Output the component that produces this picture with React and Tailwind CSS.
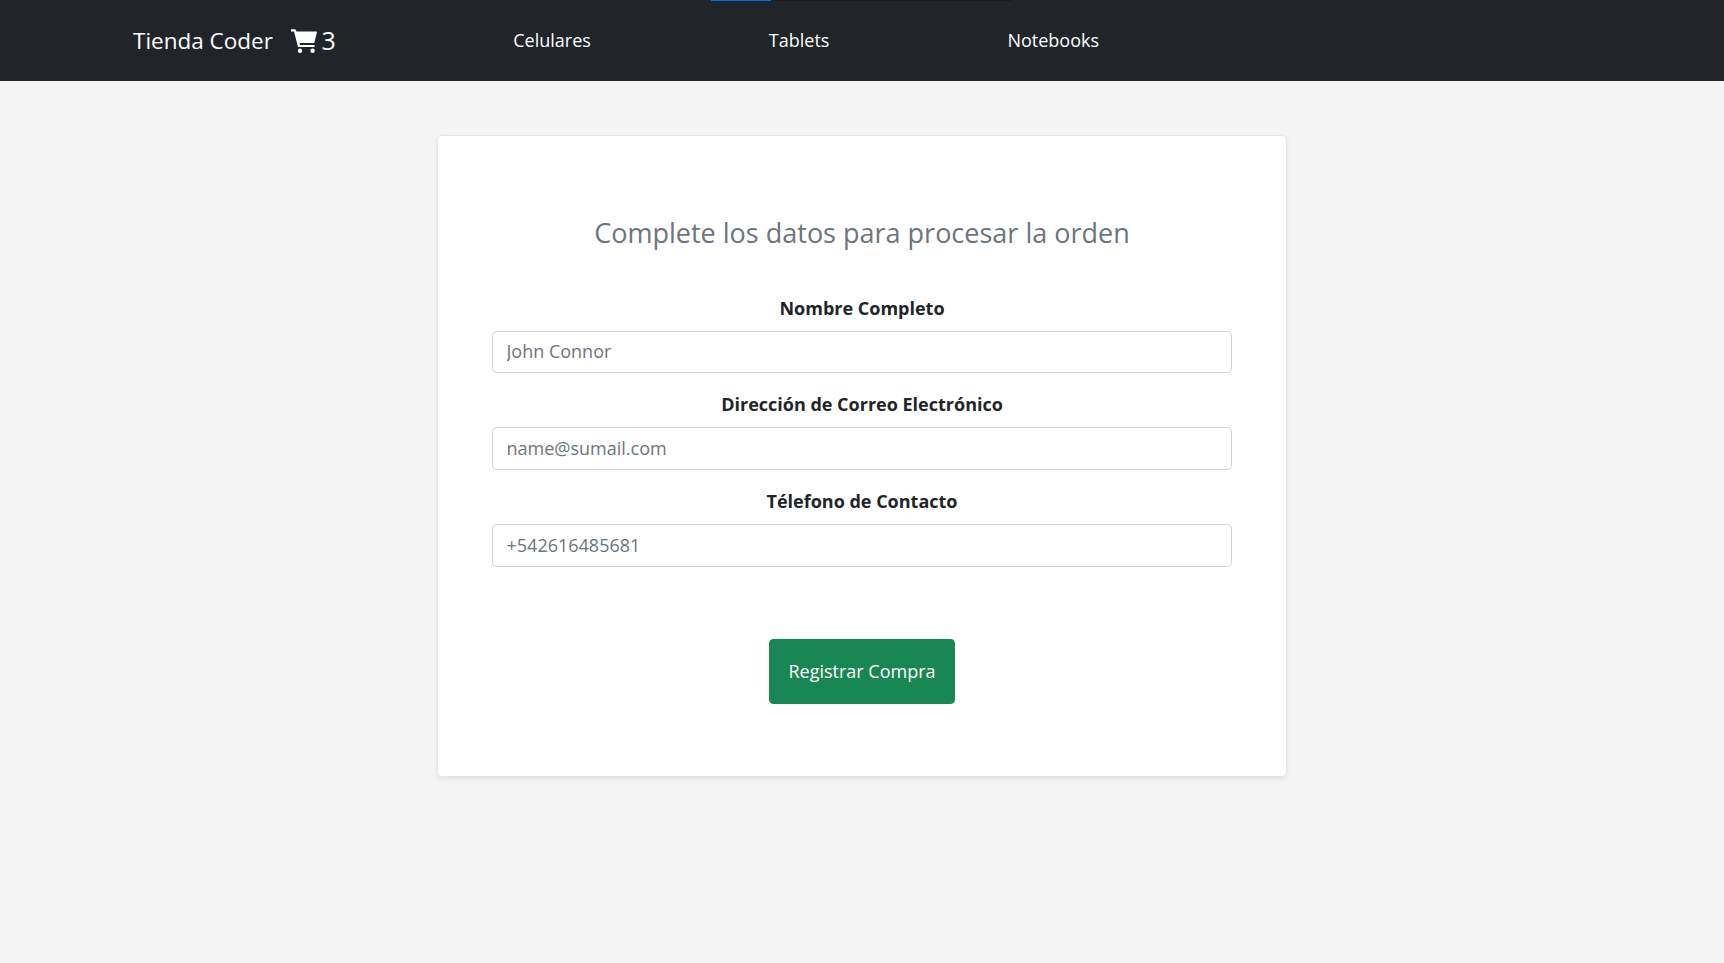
import React from "react";

function CartIcon() {
  return (
    <svg viewBox="0 0 26 24" width="26" height="24" fill="currentColor" aria-hidden="true">
      <path d="M0 0.3h3.6c.6 0 1 .3 1.2.8L5.4 2.6H25.4c.4 0 .6.3.5.7L23.4 13.4c-.1.4-.4.6-.8.6H8.6L9 16h14.6v2H7.6c-.4 0-.7-.3-.8-.7L3 2.6H0z" />
      <circle cx="9" cy="21.8" r="2.2" />
      <circle cx="21.6" cy="21.8" r="2.2" />
    </svg>
  );
}

function Field({ label, placeholder, mb }) {
  return (
    <div className={mb}>
      <label className="block text-center text-[18px] leading-[27px] font-bold text-[#212529] mb-[9px]">{label}</label>
      <input
        readOnly
        placeholder={placeholder}
        className="block w-full h-[42.5px] rounded-[4.5px] border border-[#ced4da] bg-white px-[13.5px] pb-[2px] text-[18px] text-[#212529] placeholder:text-[#6c757d] outline-none"
      />
    </div>
  );
}

export default function App() {
  return (
    <div className="min-h-[963px] bg-[#f4f4f4] font-['Open_Sans',sans-serif]">
      <div className="relative h-[81px] bg-[#212529] text-white flex items-center pl-[133px]">
        <div className="absolute top-0 left-[711px] h-[1px] w-[301px] bg-[#1c1c1c]">
          <div className="h-full w-[60px] bg-[#0670e0]" />
        </div>
        <span className="text-[22.5px]">Tienda Coder</span>
        <span className="ml-[18px] flex items-center">
          <CartIcon />
          <span className="ml-[4.5px] text-[25px]">3</span>
        </span>
        <nav className="flex items-center text-[18px]">
          <a className="ml-[177.5px]">Celulares</a>
          <a className="ml-[178px]">Tablets</a>
          <a className="ml-[178px]">Notebooks</a>
        </nav>
      </div>
      <div className="flex justify-center pt-[54px]">
        <div className="w-[850px] h-[642px] rounded-[4.5px] border border-[#e6e6e6] bg-white shadow-[0_2px_4px_rgba(0,0,0,0.075)] px-[54px] pt-[81px]">
          <h4 className="text-center text-[27px] leading-[32.4px] text-[#6c757d]">Complete los datos para procesar la orden</h4>
          <form className="mt-[45.4px]">
            <Field label="Nombre Completo" placeholder="John Connor" mb="mb-[18.1px]" />
            <Field label="Dirección de Correo Electrónico" placeholder="name@sumail.com" mb="mb-[18.5px]" />
            <Field label="Télefono de Contacto" placeholder="+542616485681" />
            <div className="flex justify-center mt-[72px]">
              <button type="button" className="w-[186px] h-[65px] rounded-[4.5px] bg-[#198754] text-white text-[18px]">Registrar Compra</button>
            </div>
          </form>
        </div>
      </div>
    </div>
  );
}
